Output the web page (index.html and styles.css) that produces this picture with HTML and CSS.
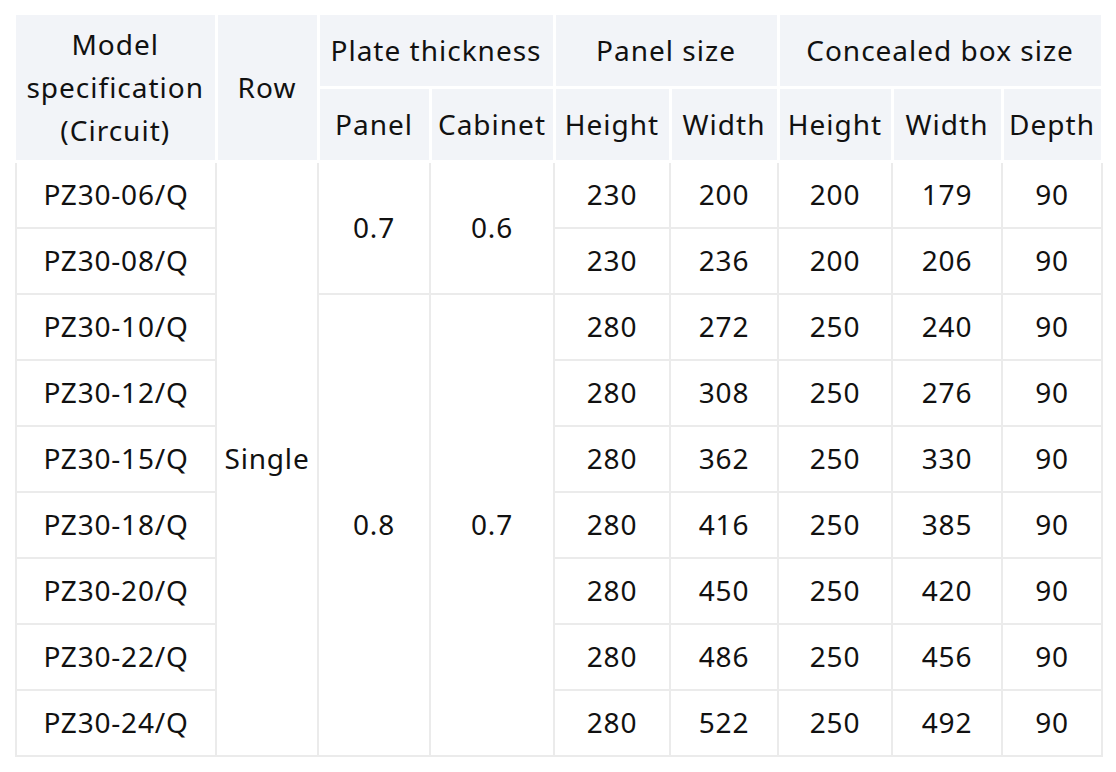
FILE: index.html
```html
<!DOCTYPE html>
<html>
<head>
<meta charset="utf-8">
<link rel="stylesheet" href="styles.css">
</head>
<body>
<table class="spec">
  <colgroup>
    <col class="c1"><col class="c2"><col class="c3"><col class="c4"><col class="c5"><col class="c6"><col class="c7"><col class="c8"><col class="c9">
  </colgroup>
  <thead>
    <tr class="h1">
      <th rowspan="2">Model<br>specification<br>(Circuit)</th>
      <th rowspan="2">Row</th>
      <th colspan="2">Plate thickness</th>
      <th colspan="2">Panel size</th>
      <th colspan="3">Concealed box size</th>
    </tr>
    <tr class="h2">
      <th>Panel</th><th>Cabinet</th><th>Height</th><th>Width</th><th>Height</th><th>Width</th><th>Depth</th>
    </tr>
  </thead>
  <tbody>
    <tr><td>PZ30-06/Q</td><td rowspan="9">Single</td><td rowspan="2">0.7</td><td rowspan="2">0.6</td><td>230</td><td>200</td><td>200</td><td>179</td><td>90</td></tr>
    <tr><td>PZ30-08/Q</td><td>230</td><td>236</td><td>200</td><td>206</td><td>90</td></tr>
    <tr><td>PZ30-10/Q</td><td rowspan="7">0.8</td><td rowspan="7">0.7</td><td>280</td><td>272</td><td>250</td><td>240</td><td>90</td></tr>
    <tr><td>PZ30-12/Q</td><td>280</td><td>308</td><td>250</td><td>276</td><td>90</td></tr>
    <tr><td>PZ30-15/Q</td><td>280</td><td>362</td><td>250</td><td>330</td><td>90</td></tr>
    <tr><td>PZ30-18/Q</td><td>280</td><td>416</td><td>250</td><td>385</td><td>90</td></tr>
    <tr><td>PZ30-20/Q</td><td>280</td><td>450</td><td>250</td><td>420</td><td>90</td></tr>
    <tr><td>PZ30-22/Q</td><td>280</td><td>486</td><td>250</td><td>456</td><td>90</td></tr>
    <tr><td>PZ30-24/Q</td><td>280</td><td>522</td><td>250</td><td>492</td><td>90</td></tr>
  </tbody>
</table>
</body>
</html>
```

FILE: styles.css
```css
html, body {
  margin: 0;
  padding: 0;
  background: #ffffff;
}
body {
  padding: 15px 0 0 15px;
  font-family: "Noto Sans", "Open Sans", sans-serif;
  color: #111;
}
.spec {
  border-collapse: collapse;
  table-layout: fixed;
  width: 1086px;
  font-size: 28px;
}
.c1 { width: 200px; }
.c2 { width: 102px; }
.c3 { width: 112px; }
.c4 { width: 124px; }
.c5 { width: 116px; }
.c6 { width: 108px; }
.c7 { width: 114px; }
.c8 { width: 110px; }
.c9 { width: 100px; }
.spec th {
  background: #f2f4f8;
  font-weight: normal;
  border: 3px solid #ffffff;
  padding: 0;
  line-height: 43px;
  text-align: center;
  letter-spacing: 1px;
  white-space: nowrap;
}
.spec thead tr:first-child th { border-top: none; }
.spec thead th:first-child { border-left: none; }
.h1 { height: 72px; }
.h2 { height: 74px; }
.spec td {
  border: 2px solid #ebebeb;
  padding: 0 0 2px;
  height: 62px;
  text-align: center;
  letter-spacing: 0.8px;
}
.spec tbody tr:first-child td { border-top: 2px solid #ffffff; }
```
